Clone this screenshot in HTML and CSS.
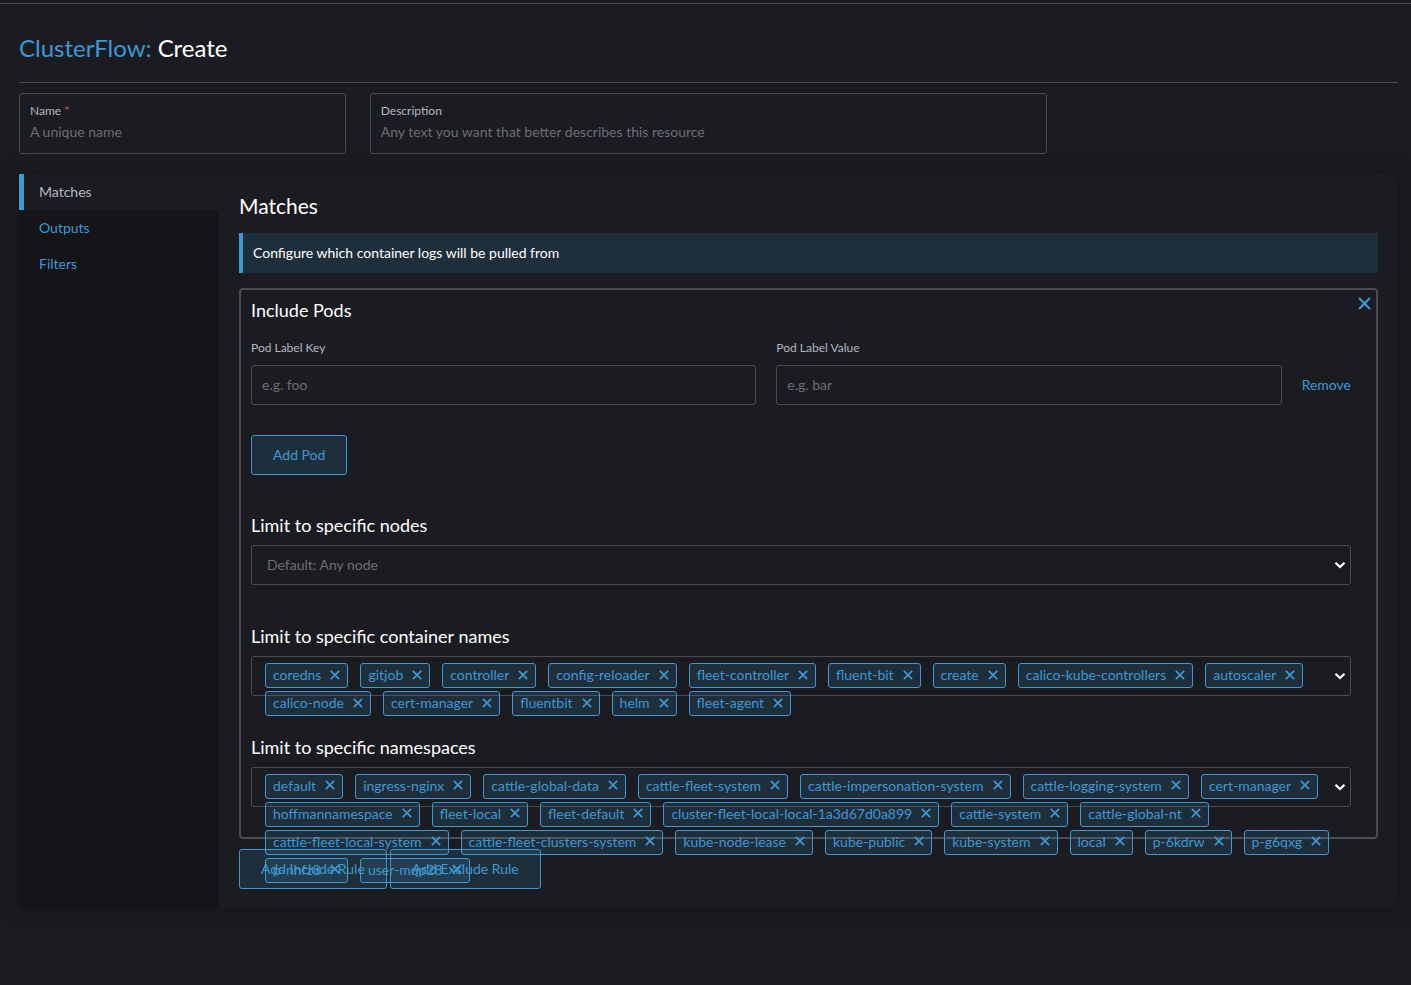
FILE: index.html
```html
<!DOCTYPE html>
<html lang="en">
<head>
<meta charset="utf-8">
<title>ClusterFlow: Create</title>
<link rel="stylesheet" href="styles.css">
</head>
<body>
<svg class="sprite" aria-hidden="true">
  <symbol id="close" viewBox="0 0 12 12"><path d="M1 1 11 11M11 1 1 11" fill="none" stroke="currentColor" stroke-width="2"/></symbol>
  <symbol id="chevron" viewBox="0 0 12 8"><path d="M1.5 1.8 6 6 10.5 1.8" fill="none" stroke="currentColor" stroke-width="2.2"/></symbol>
</svg>
<main class="page">
  <header class="masthead">
    <h1><a href="#flows">ClusterFlow:</a> Create</h1>
  </header>
  <div class="meta">
    <div class="labeled name">
      <label for="name">Name <span class="required">*</span></label>
      <input id="name" type="text" placeholder="A unique name">
    </div>
    <div class="labeled description">
      <label for="description">Description</label>
      <input id="description" type="text" placeholder="Any text you want that better describes this resource">
    </div>
  </div>
  <div class="tabbed">
    <nav class="tabs">
      <a class="active" href="#matches">Matches</a>
      <a href="#outputs">Outputs</a>
      <a href="#filters">Filters</a>
    </nav>
    <section class="panel" id="matches">
      <h2>Matches</h2>
      <p class="banner">Configure which container logs will be pulled from</p>
      <div class="rule">
        <button class="rule-close" type="button" aria-label="Remove rule"><svg><use href="#close"/></svg></button>
        <h3>Include Pods</h3>
        <div class="pods">
          <div class="pair">
            <label for="key">Pod Label Key</label>
            <input id="key" type="text" placeholder="e.g. foo">
          </div>
          <div class="pair">
            <label for="value">Pod Label Value</label>
            <input id="value" type="text" placeholder="e.g. bar">
          </div>
          <button class="link" type="button">Remove</button>
        </div>
        <button class="btn" type="button">Add Pod</button>
        <div class="limit first">
          <h3><label for="nodes">Limit to specific nodes</label></h3>
          <div class="box">
            <select id="nodes"><option>Default: Any node</option></select>
            <svg class="chevron"><use href="#chevron"/></svg>
          </div>
        </div>
        <div class="limit">
          <h3>Limit to specific container names</h3>
          <div class="box">
            <ul class="chips" id="containers"></ul>
            <button class="toggle" type="button" aria-label="Open container names"><svg class="chevron"><use href="#chevron"/></svg></button>
          </div>
        </div>
        <div class="limit">
          <h3>Limit to specific namespaces</h3>
          <div class="box">
            <ul class="chips raised" id="namespaces"></ul>
            <button class="toggle" type="button" aria-label="Open namespaces"><svg class="chevron"><use href="#chevron"/></svg></button>
          </div>
        </div>
      </div>
      <div class="actions">
        <button class="btn" type="button">Add Include Rule</button>
        <button class="btn" type="button">Add Exclude Rule</button>
      </div>
    </section>
  </div>
</main>
<script src="app.js"></script>
</body>
</html>
```
FILE: styles.css
```css
:root {
  --bg: #1b1c21;
  --nav: #141419;
  --border: #4a4b52;
  --link: #3d98d3;
  --accent: rgba(61, 152, 211, 0.15);
  --text: #b6b6c2;
  --muted: #6c6c76;
}
* { box-sizing: border-box; }
body {
  margin: 3px 0 0;
  border-top: 1px solid var(--border);
  background: var(--bg);
  color: var(--text);
  font: 14px/20px Lato, sans-serif;
}
h1, h2, h3, p, ul { margin: 0; padding: 0; font-weight: 400; }
h1, h2, h3 { color: #fff; }
a { color: var(--link); text-decoration: none; }
input, select, button { font: inherit; color: inherit; }
button { padding: 0; border: 0; background: none; color: var(--link); cursor: pointer; }
input::placeholder { color: var(--muted); opacity: 1; }
.sprite { position: absolute; width: 0; height: 0; }

.page { padding: 29px 13px 76px 19px; }
.masthead { padding-bottom: 19px; border-bottom: 1px solid var(--border); }
h1 { font-size: 24px; line-height: 30px; }
h2 { font-size: 21px; line-height: 24px; }
h3 { font-size: 18px; line-height: 22px; }

.meta {
  display: grid;
  grid-template-columns: repeat(12, 1fr);
  gap: 24px;
  margin: 10px 0 20px;
}
.labeled {
  display: flex;
  flex-direction: column;
  padding: 8px 10px 11px;
  border: 1px solid var(--border);
  border-radius: 3px;
}
.name { grid-column: span 3; }
.description { grid-column: span 6; }
.labeled label, .pair label { font-size: 12px; line-height: 18px; }
.labeled input {
  height: 22px;
  padding: 0;
  border: 0;
  background: none;
}
.required { color: #f64747; }

.tabbed {
  display: flex;
  border-radius: 8px;
  box-shadow: 0 0 20px #141419;
  background: var(--bg);
}
.tabs {
  flex: 0 0 200px;
  border-radius: 0 0 0 8px;
  background: var(--nav);
}
.tabs a { display: block; padding: 8px 20px; }
.tabs .active {
  padding-left: 15px;
  border-left: 5px solid var(--link);
  background: var(--bg);
  color: var(--text);
}
.panel { flex: 1; min-width: 0; padding: 20px; }
.banner {
  margin: 15px 0;
  padding: 10px;
  border-left: 4px solid var(--link);
  background: var(--accent);
  color: #fff;
}

.rule {
  position: relative;
  padding: 9px 25px 30px 10px;
  border: 2px solid var(--border);
  border-radius: 4px;
}
.rule-close { position: absolute; top: 7px; right: 5px; width: 13px; height: 13px; }
.rule-close svg { display: block; width: 13px; height: 13px; }
.pods {
  display: flex;
  align-items: flex-end;
  gap: 20px;
  margin: 18px 0 30px;
}
.pair { display: flex; flex: 1; flex-direction: column; gap: 8px; }
.pair input {
  height: 40px;
  padding: 0 10px 2px;
  border: 1px solid var(--border);
  border-radius: 3px;
  background: none;
}
.link { height: 40px; }
.btn {
  height: 40px;
  padding: 0 21px;
  border: 1px solid var(--link);
  border-radius: 3px;
  background: var(--accent);
}
.limit { margin-top: 40px; }
.limit.first { margin-top: 39px; }
.limit h3 { margin-bottom: 9px; }
.box {
  display: flex;
  align-items: flex-start;
  height: 40px;
  border: 1px solid var(--border);
  border-radius: 3px;
}
.box select {
  flex: 1;
  height: 38px;
  padding: 0 15px;
  border: 0;
  appearance: none;
  background: none;
  color: var(--muted);
}
.chevron { display: block; flex: none; width: 12px; height: 8px; color: #fff; }
.box > .chevron { align-self: center; margin-right: 4px; }
.toggle { display: flex; align-items: center; height: 38px; margin-right: 4px; }
.chips {
  display: flex;
  flex: 1;
  flex-wrap: wrap;
  gap: 3px 12px;
  padding: 6px 0 0 13px;
  list-style: none;
}
.chips li {
  display: flex;
  align-items: center;
  gap: 9px;
  height: 25px;
  padding: 0 7px 1px;
  border: 1px solid var(--link);
  border-radius: 3px;
  background: var(--accent);
  color: var(--link);
}
.chips svg { display: block; width: 10px; height: 10px; }
.raised button { padding-bottom: 2px; }
.actions { display: flex; gap: 3px; margin-top: 10px; }
```
FILE: app.js
```js
const chips = {
  containers: ['coredns', 'gitjob', 'controller', 'config-reloader', 'fleet-controller', 'fluent-bit', 'create',
    'calico-kube-controllers', 'autoscaler', 'calico-node', 'cert-manager', 'fluentbit', 'helm', 'fleet-agent'],
  namespaces: ['default', 'ingress-nginx', 'cattle-global-data', 'cattle-fleet-system', 'cattle-impersonation-system',
    'cattle-logging-system', 'cert-manager', 'hoffmannamespace', 'fleet-local', 'fleet-default',
    'cluster-fleet-local-local-1a3d67d0a899', 'cattle-system', 'cattle-global-nt', 'cattle-fleet-local-system',
    'cattle-fleet-clusters-system', 'kube-node-lease', 'kube-public', 'kube-system', 'local', 'p-6kdrw', 'p-g6qxg',
    'p-nhfz8', 'user-mqp28']
};
for (const [id, names] of Object.entries(chips)) {
  document.getElementById(id).innerHTML = names.map(name =>
    `<li>${name}<button type="button" aria-label="Remove ${name}"><svg><use href="#close"/></svg></button></li>`).join('');
}
```
